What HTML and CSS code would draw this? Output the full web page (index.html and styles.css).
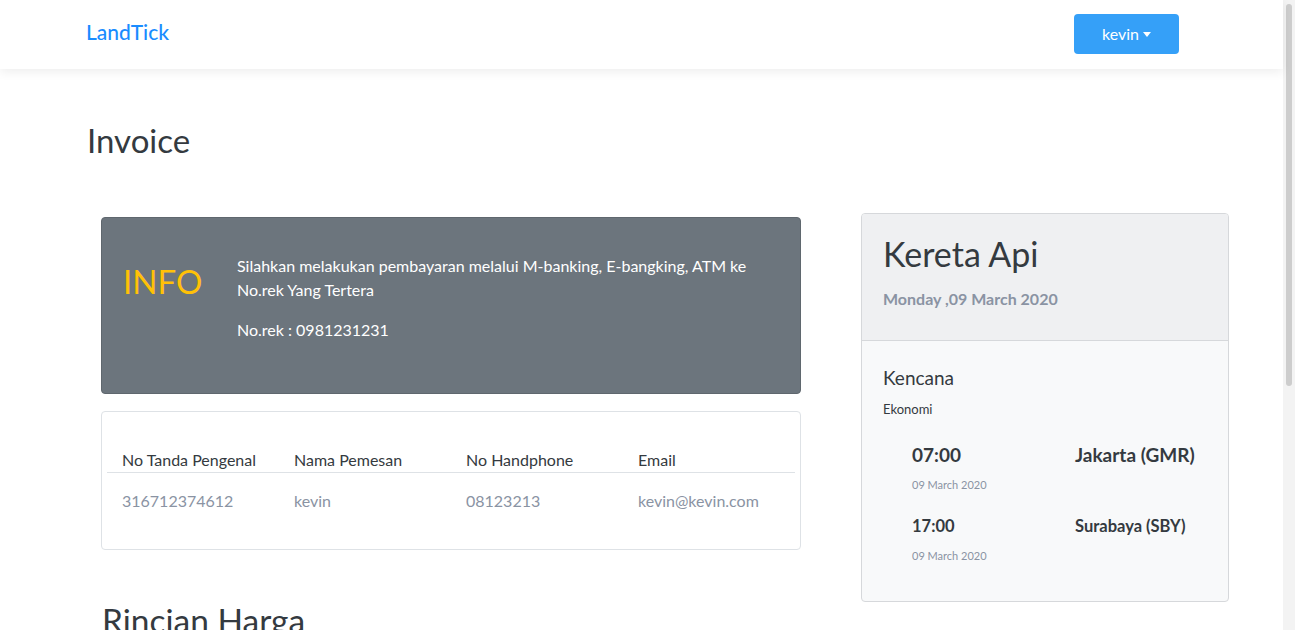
FILE: index.html
```html
<!DOCTYPE html>
<html lang="id">
<head>
<meta charset="UTF-8">
<meta name="viewport" content="width=device-width, initial-scale=1.0">
<title>Invoice - LandTick</title>
<link rel="stylesheet" href="styles.css">
</head>
<body>
<div class="pagina">
    <nav class="navbar">
        <a href="#" class="brand">LandTick</a>
        <button class="user-boton">kevin <span class="caret"></span></button>
    </nav>

    <main class="contenido">
        <h1 class="titulo">Invoice</h1>

        <div class="fila">
            <div class="col-izq">
                <!-- Caja de informacion de pago -->
                <div class="info">
                    <div class="info-label">INFO</div>
                    <div class="info-texto">
                        <p>Silahkan melakukan pembayaran melalui M-banking, E-bangking, ATM ke No.rek Yang Tertera</p>
                        <p>No.rek : 0981231231</p>
                    </div>
                </div>

                <!-- Datos del pemesan -->
                <div class="tabla-card">
                    <table class="tabla">
                        <thead>
                            <tr>
                                <th>No Tanda Pengenal</th>
                                <th>Nama Pemesan</th>
                                <th>No Handphone</th>
                                <th>Email</th>
                            </tr>
                        </thead>
                        <tbody>
                            <tr>
                                <td>316712374612</td>
                                <td>kevin</td>
                                <td>08123213</td>
                                <td>kevin@kevin.com</td>
                            </tr>
                        </tbody>
                    </table>
                </div>

                <h2 class="subtitulo">Rincian Harga</h2>
            </div>

            <div class="col-der">
                <div class="tiket">
                    <div class="tiket-header">
                        <h2>Kereta Api</h2>
                        <p class="fecha">Monday ,09 March 2020</p>
                    </div>
                    <div class="tiket-body">
                        <h4 class="kereta">Kencana</h4>
                        <p class="kelas">Ekonomi</p>
                        <div class="viaje">
                            <div class="viaje-fila grande">
                                <div>
                                    <div class="hora">07:00</div>
                                    <div class="dia">09 March 2020</div>
                                </div>
                                <div class="estacion">Jakarta (GMR)</div>
                            </div>
                            <div class="viaje-fila">
                                <div>
                                    <div class="hora">17:00</div>
                                    <div class="dia">09 March 2020</div>
                                </div>
                                <div class="estacion">Surabaya (SBY)</div>
                            </div>
                        </div>
                    </div>
                </div>
            </div>
        </div>
    </main>
</div>
<!-- barra de desplazamiento -->
<div class="scroll">
    <div class="scroll-thumb"></div>
</div>
</body>
</html>
```

FILE: styles.css
```css
* {
    box-sizing: border-box;
}

body {
    margin: 0;
    height: 100vh;
    overflow: hidden;
    display: flex;
    font-family: Lato, "Open Sans", sans-serif;
    color: #343a40;
    background: #fff;
}

.pagina {
    flex: 1;
    min-width: 0;
}

/* Barra de desplazamiento */
.scroll {
    width: 12px;
    flex-shrink: 0;
    padding: 4px 3px 0;
    background: #f3f3f3;
}

.scroll-thumb {
    height: 382px;
    border-radius: 3px;
    background: #cdcdcd;
}

/* Barra de navegacion */
.navbar {
    height: 69px;
    display: flex;
    align-items: center;
    justify-content: space-between;
    padding: 0 104px 0 87px;
    background: #fff;
    box-shadow: 0 3px 10px rgba(0, 0, 0, 0.07);
    position: relative;
}

.brand {
    margin-top: -7px;
    margin-left: -1px;
    color: #1a8cff;
    font-size: 21px;
    font-weight: 500;
    text-decoration: none;
}

.user-boton {
    width: 105px;
    height: 40px;
    margin-top: -1px;
    padding-bottom: 2px;
    background: #35a0f8;
    color: #fff;
    border: none;
    border-radius: 4px;
    font-family: Lato, sans-serif;
    font-size: 16px;
    cursor: pointer;
}

.caret {
    display: inline-block;
    vertical-align: 3px;
    border-top: 5px solid #fff;
    border-left: 4px solid transparent;
    border-right: 4px solid transparent;
}

/* Contenido */
.contenido {
    padding: 52px 0 0 87px;
}

.titulo {
    margin: 0;
    font-size: 33px;
    font-weight: 400;
    line-height: 1.2;
}

.fila {
    display: flex;
    align-items: flex-start;
    gap: 60px;
    margin-top: 52px;
    padding-left: 14px;
}

.col-izq {
    width: 700px;
    padding-top: 4px;
}

.col-der {
    width: 368px;
}

/* Caja INFO */
.info {
    display: flex;
    height: 177px;
    padding: 36px 20px 0 21px;
    background: #6c757d;
    border: 1px solid #5f676e;
    border-radius: 4px;
    color: #fff;
}

.info-label {
    width: 114px;
    margin-top: 8px;
    color: #ffc107;
    font-size: 33px;
    line-height: 1.2;
}

.info-texto {
    flex: 1;
    font-size: 16px;
    line-height: 24px;
}

.info-texto p {
    margin: 0 0 16px;
}

/* Tabla pemesan */
.tabla-card {
    margin-top: 17px;
    padding: 24px 5px 20px;
    border: 1px solid #dee2e6;
    border-radius: 4px;
}

.tabla {
    width: 100%;
    table-layout: fixed;
    border-collapse: collapse;
    font-size: 16px;
    line-height: 24px;
}

.tabla th {
    text-align: left;
    font-weight: 400;
    padding: 12px 15px 0;
    border-bottom: 1px solid #dee2e6;
}

.tabla td {
    padding: 16px 15px;
    color: #8a93a3;
}

.subtitulo {
    margin: 50px 0 0 1px;
    font-size: 33.5px;
    font-weight: 400;
    line-height: 1.2;
}

/* Tiket kereta */
.tiket {
    border: 1px solid #d6d8db;
    border-radius: 4px;
    background: #f8f9fa;
    overflow: hidden;
}

.tiket-header {
    height: 127px;
    padding: 20px 21px 0;
    background: #eff0f2;
    border-bottom: 1px solid #d6d8db;
}

.tiket-header h2 {
    margin: 0;
    font-size: 34px;
    font-weight: 400;
    line-height: 1.2;
}

.fecha {
    margin: 15px 0 0;
    color: #8a93a3;
    font-size: 16px;
    font-weight: 700;
}

.tiket-body {
    height: 260px;
    padding: 25px 21px 0;
}

.kereta {
    margin: 0;
    font-size: 19px;
    font-weight: 400;
    line-height: 24px;
}

.kelas {
    margin: 11px 0 0;
    font-size: 13px;
}

.viaje {
    margin-top: 26px;
    padding-left: 29px;
}

.viaje-fila {
    display: flex;
    margin-bottom: 23px;
}

.viaje-fila > div:first-child {
    width: 163px;
}

.hora,
.estacion {
    font-size: 16.5px;
    font-weight: 700;
    line-height: 24px;
}

.grande .hora,
.grande .estacion {
    font-size: 19px;
}

.dia {
    margin-top: 11px;
    color: #8a93a3;
    font-size: 11px;
}
```
